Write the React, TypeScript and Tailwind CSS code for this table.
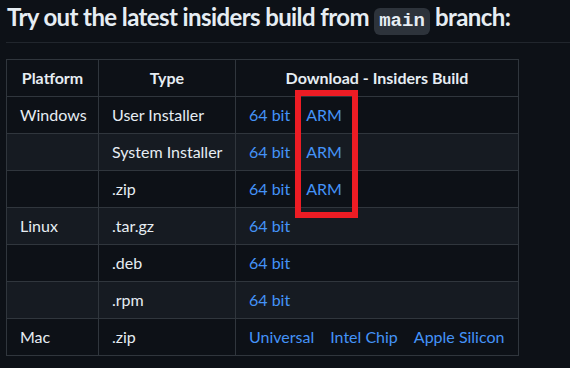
const rows: { platform: string; type: string; links: string[] }[] = [
  { platform: "Windows", type: "User Installer", links: ["64 bit", "ARM"] },
  { platform: "", type: "System Installer", links: ["64 bit", "ARM"] },
  { platform: "", type: ".zip", links: ["64 bit", "ARM"] },
  { platform: "Linux", type: ".tar.gz", links: ["64 bit"] },
  { platform: "", type: ".deb", links: ["64 bit"] },
  { platform: "", type: ".rpm", links: ["64 bit"] },
  { platform: "Mac", type: ".zip", links: ["Universal", "Intel Chip", "Apple Silicon"] },
];

export default function App() {
  return (
    <div
      className="relative h-[368px] w-[570px] overflow-hidden bg-[#0d1117] pl-[6px] text-[#e6edf3]"
      style={{ fontFamily: 'Lato, "Noto Sans", sans-serif' }}
    >
      <h2 className="border-b border-[#21262d] pb-[7px] pl-px pt-[2px] text-[24px] font-bold leading-[30px] tracking-[-0.6px] whitespace-nowrap">
        Try out the latest insiders build from{" "}
        <code className="inline-block rounded-md bg-[#2d333b] px-[5px] font-['Liberation_Mono',monospace] text-[19px] leading-[27px] font-bold tracking-normal">
          main
        </code>{" "}
        branch:
      </h2>

      <table className="mt-[16px] w-[513px] table-fixed border-collapse text-[16px] leading-6">
        <colgroup>
          <col className="w-[92px]" />
          <col className="w-[137px]" />
          <col />
        </colgroup>
        <thead>
          <tr>
            {["Platform", "Type", "Download - Insiders Build"].map((h) => (
              <th
                key={h}
                className="border border-[#30363d] px-[13px] py-[6px] text-center font-bold whitespace-nowrap"
              >
                {h}
              </th>
            ))}
          </tr>
        </thead>
        <tbody>
          {rows.map((r, i) => (
            <tr key={i} className={i % 2 === 1 ? "bg-[#161b22]" : "bg-[#0d1117]"}>
              <td className="border border-[#30363d] px-[13px] py-[6px] whitespace-nowrap">{r.platform}</td>
              <td className="border border-[#30363d] px-[13px] py-[6px] whitespace-nowrap">{r.type}</td>
              <td className="border border-[#30363d] px-[13px] py-[6px] whitespace-nowrap">
                <div className="flex gap-4 text-[#4493f8]">
                  {r.links.map((l) => (
                    <span key={l}>{l}</span>
                  ))}
                </div>
              </td>
            </tr>
          ))}
        </tbody>
      </table>

      {/* annotation box round the ARM links */}
      <div className="absolute left-[295px] top-[90px] h-[128px] w-[63px] border-[6px] border-[#ed1c24]" />
    </div>
  );
}
